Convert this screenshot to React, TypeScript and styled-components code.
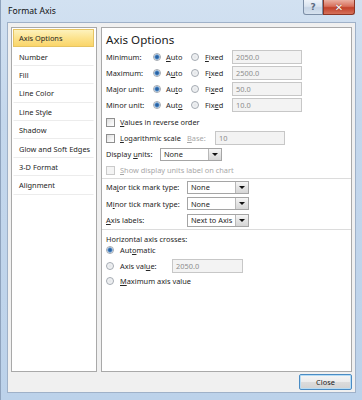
import React from 'react';
import styled, { createGlobalStyle } from 'styled-components';

const GlobalStyle = createGlobalStyle`
  html, body {
    margin: 0;
    padding: 0;
    background: #c8daee;
  }

  * {
    box-sizing: border-box;
  }
`;

const Window = styled.div`
  width: 362px;
  height: 400px;
  display: flex;
  flex-direction: column;
  background: linear-gradient(180deg, #d2e1f1 0%, #c4d7ec 30%, #bcd2ea 100%);
  border-left: 1px solid #8fa3bd;
  font-family: 'Noto Sans', 'Open Sans', sans-serif;
  font-size: 7.4px;
  color: #262626;
  overflow: hidden;
`;

const TitleBar = styled.div`
  display: flex;
  align-items: flex-start;
  height: 22px;
  flex-shrink: 0;
`;

const Title = styled.span`
  margin: 5px 0 0 7px;
  font-size: 8.6px;
  color: #101010;
`;

const CaptionButtons = styled.div`
  display: flex;
  margin-left: auto;
  margin-right: 7px;
`;

const CaptionButton = styled.div<{ $close?: boolean }>`
  display: flex;
  align-items: center;
  justify-content: center;
  width: ${(p) => (p.$close ? '32px' : '20px')};
  height: 15px;
  border: 1px solid ${(p) => (p.$close ? '#8c3524' : '#7c8ea6')};
  border-top: none;
  border-radius: 0 0 ${(p) => (p.$close ? '3px 0' : '0 3px')};
  background: ${(p) =>
    p.$close
      ? 'linear-gradient(180deg, #eab0a2 0%, #d8705c 45%, #c2412a 55%, #d5715a 100%)'
      : 'linear-gradient(180deg, #eef3f9 0%, #d9e3ef 45%, #c6d4e5 55%, #d6e2ef 100%)'};
  color: ${(p) => (p.$close ? '#ffffff' : '#5a6a80')};
  font-size: ${(p) => (p.$close ? '10px' : '9px')};
  font-weight: bold;
  font-family: 'DejaVu Sans', sans-serif;
  text-shadow: ${(p) => (p.$close ? '0 0 1px #5a1a10' : 'none')};
`;

const Client = styled.div`
  flex: 1;
  display: flex;
  flex-direction: column;
  margin: 0 6px 7px 6px;
  background: #f0f0f0;
  border: 1px solid #9fb1c8;
`;

const Body = styled.div`
  display: flex;
  gap: 4px;
  padding: 4px 3px 0 3px;
  height: 349px;
`;

const NavList = styled.div`
  width: 86px;
  flex-shrink: 0;
  background: #ffffff;
  border: 1px solid #a9a9a9;
  padding: 1px 2px 1px 1px;
`;

const NavItem = styled.div<{ $active?: boolean }>`
  display: flex;
  align-items: center;
  height: 18.4px;
  padding-left: 5px;
  border: 1px solid ${(p) => (p.$active ? '#e6c462' : 'transparent')};
  border-bottom-color: ${(p) => (p.$active ? '#e6c462' : '#ececec')};
  background: ${(p) =>
    p.$active ? 'linear-gradient(180deg, #fdf2bd 0%, #fce38e 50%, #fad56a 100%)' : 'transparent'};
  white-space: nowrap;
`;

const Pane = styled.div`
  flex: 1;
  background: #ffffff;
  border: 1px solid #a9a9a9;
  padding: 0 4px;
  display: flex;
  flex-direction: column;
`;

const Heading = styled.div`
  font-size: 11.6px;
  line-height: 17px;
  padding-top: 3px;
  height: 21px;
  color: #1a1a1a;
`;

const BoundsGrid = styled.div`
  display: grid;
  grid-template-columns: 47px 13px 25px 14px 27px 70px;
  grid-auto-rows: 16px;
  align-items: center;
`;

const Row = styled.div<{ $h?: number; $mt?: number }>`
  display: flex;
  align-items: center;
  height: ${(p) => p.$h ?? 16}px;
  margin-top: ${(p) => p.$mt ?? 0}px;
  white-space: nowrap;
`;

const Label = styled.span<{ $w?: number; $ml?: number; $disabled?: boolean }>`
  display: inline-block;
  width: ${(p) => (p.$w ? `${p.$w}px` : 'auto')};
  margin-left: ${(p) => p.$ml ?? 0}px;
  flex-shrink: 0;
  color: ${(p) => (p.$disabled ? '#a8a8a8' : 'inherit')};
  white-space: nowrap;
`;

const Key = styled.span`
  text-decoration: underline;
  text-underline-offset: 1px;
`;

const Radio = styled.span<{ $checked?: boolean }>`
  display: inline-block;
  width: 8px;
  height: 8px;
  border-radius: 50%;
  flex-shrink: 0;
  border: 1px solid #a3a9b1;
  background: ${(p) =>
    p.$checked
      ? 'radial-gradient(circle, #1d4f8c 0, #3d78b8 1.6px, #9cc0e4 2.6px, #e9eef4 3px)'
      : 'radial-gradient(circle, #e2e4e7 0, #eef0f2 2px, #f9fafb 4px)'};
`;

const Check = styled.span<{ $disabled?: boolean }>`
  display: inline-block;
  width: 9px;
  height: 9px;
  flex-shrink: 0;
  margin-right: 5px;
  border: 1px solid ${(p) => (p.$disabled ? '#cacaca' : '#8f8f8f')};
  background: ${(p) =>
    p.$disabled ? '#f4f4f4' : 'linear-gradient(135deg, #dcdcdc 0%, #f4f4f4 60%, #ffffff 100%)'};
`;

const TextBox = styled.div<{ $w: number }>`
  display: flex;
  align-items: center;
  width: ${(p) => p.$w}px;
  height: 14px;
  flex-shrink: 0;
  padding-left: 3px;
  background: #f3f3f3;
  border: 1px solid #c7c7c7;
  color: #8d8d8d;
`;

const Select = styled.div<{ $w: number }>`
  display: flex;
  align-items: center;
  width: ${(p) => p.$w}px;
  height: 13px;
  flex-shrink: 0;
  background: #ffffff;
  border: 1px solid #a5a5a5;
`;

const SelectText = styled.span`
  flex: 1;
  padding-left: 3px;
`;

const SelectArrow = styled.span`
  display: flex;
  align-items: center;
  justify-content: center;
  width: 13px;
  height: 11px;
  border-left: 1px solid #b8b8b8;
  background: linear-gradient(180deg, #f6f6f6 0%, #e4e4e4 50%, #d6d6d6 100%);

  &::after {
    content: '';
    border-left: 3px solid transparent;
    border-right: 3px solid transparent;
    border-top: 3px solid #111;
  }
`;

const Separator = styled.div`
  height: 1px;
  background: #dcdcdc;
  margin: 0 -4px;
`;

const Footer = styled.div`
  display: flex;
  justify-content: flex-end;
  padding: 2px 3px 0 0;
`;

const Button = styled.div`
  display: flex;
  align-items: center;
  justify-content: center;
  width: 53px;
  height: 16px;
  border: 1px solid #4a8cc4;
  border-radius: 2px;
  box-shadow: inset 0 0 0 1px #b6dcf5;
  background: linear-gradient(180deg, #f6f6f6 0%, #ebebeb 50%, #dcdcdc 51%, #d2d2d2 100%);
  color: #1a1a1a;
`;

const navItems = [
  'Axis Options',
  'Number',
  'Fill',
  'Line Color',
  'Line Style',
  'Shadow',
  'Glow and Soft Edges',
  '3-D Format',
  'Alignment',
];

// label, [before, key, after] for Auto and Fixed, value
const bounds: [string, [string, string, string], [string, string, string], string][] = [
  ['Minimum:', ['', 'A', 'uto'], ['', 'F', 'ixed'], '2050.0'],
  ['Maximum:', ['A', 'u', 'to'], ['F', 'i', 'xed'], '2500.0'],
  ['Major unit:', ['Au', 't', 'o'], ['Fi', 'x', 'ed'], '50.0'],
  ['Minor unit:', ['Aut', 'o', ''], ['Fix', 'e', 'd'], '10.0'],
];

const Mnemonic = ({ parts }: { parts: [string, string, string] }) => (
  <>
    {parts[0]}
    <Key>{parts[1]}</Key>
    {parts[2]}
  </>
);

const Dropdown = ({ value }: { value: string }) => (
  <Select $w={62}>
    <SelectText>{value}</SelectText>
    <SelectArrow />
  </Select>
);

const App = () => {
  return (
    <>
      <GlobalStyle />
      <Window>
        <TitleBar>
          <Title>Format Axis</Title>
          <CaptionButtons>
            <CaptionButton>?</CaptionButton>
            <CaptionButton $close>✕</CaptionButton>
          </CaptionButtons>
        </TitleBar>
        <Client>
          <Body>
            <NavList>
              {navItems.map((item, i) => (
                <NavItem key={item} $active={i === 0}>
                  {item}
                </NavItem>
              ))}
            </NavList>
            <Pane>
              <Heading>Axis Options</Heading>
              <BoundsGrid>
                {bounds.map(([label, auto, fixed, value]) => (
                  <React.Fragment key={label}>
                    <Label>{label}</Label>
                    <Radio $checked />
                    <Label>
                      <Mnemonic parts={auto} />
                    </Label>
                    <Radio />
                    <Label>
                      <Mnemonic parts={fixed} />
                    </Label>
                    <TextBox $w={70}>{value}</TextBox>
                  </React.Fragment>
                ))}
              </BoundsGrid>
              <Row $mt={1}>
                <Check />
                <Label>
                  <Key>V</Key>alues in reverse order
                </Label>
              </Row>
              <Row>
                <Check />
                <Label $w={67}>
                  <Key>L</Key>ogarithmic scale
                </Label>
                <Label $w={28} $disabled>
                  <Key>B</Key>ase:
                </Label>
                <TextBox $w={70}>10</TextBox>
              </Row>
              <Row>
                <Label $w={54}>
                  Display <Key>u</Key>nits:
                </Label>
                <Dropdown value="None" />
              </Row>
              <Row>
                <Check $disabled />
                <Label $disabled>
                  <Key>S</Key>how display units label on chart
                </Label>
              </Row>
              <Separator />
              <Row $h={16.5}>
                <Label $w={81}>
                  Ma<Key>j</Key>or tick mark type:
                </Label>
                <Dropdown value="None" />
              </Row>
              <Row $h={16.5}>
                <Label $w={81}>
                  M<Key>i</Key>nor tick mark type:
                </Label>
                <Dropdown value="None" />
              </Row>
              <Row $h={16.5}>
                <Label $w={81}>
                  <Key>A</Key>xis labels:
                </Label>
                <Dropdown value="Next to Axis" />
              </Row>
              <Separator />
              <Row $h={12} $mt={3}>
                <Label>Horizontal axis crosses:</Label>
              </Row>
              <Row $h={11}>
                <Radio $checked />
                <Label $ml={6}>
                  Aut<Key>o</Key>matic
                </Label>
              </Row>
              <Row $h={16} $mt={2}>
                <Radio />
                <Label $w={52} $ml={6}>
                  Axis val<Key>u</Key>e:
                </Label>
                <TextBox $w={71}>2050.0</TextBox>
              </Row>
              <Row $h={14}>
                <Radio />
                <Label $ml={6}>
                  <Key>M</Key>aximum axis value
                </Label>
              </Row>
            </Pane>
          </Body>
          <Footer>
            <Button>Close</Button>
          </Footer>
        </Client>
      </Window>
    </>
  );
};

export default App;
